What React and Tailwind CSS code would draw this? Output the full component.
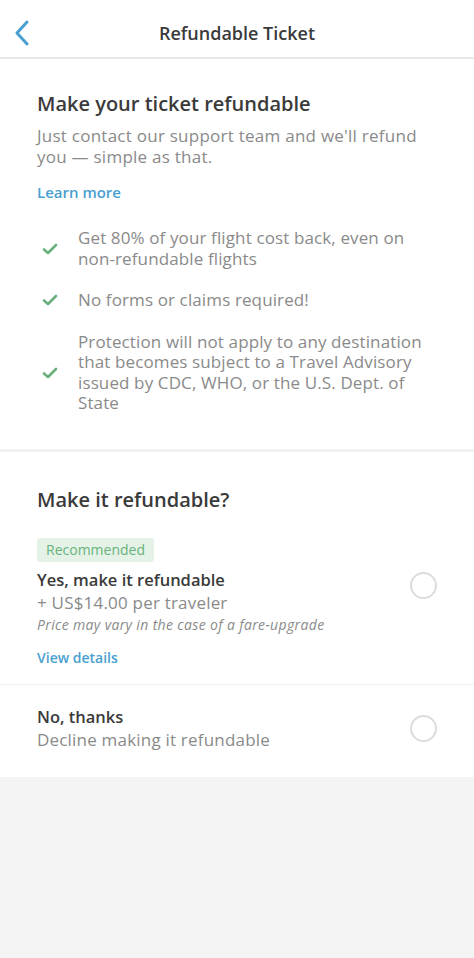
import React from "react";

const font = { fontFamily: '"Open Sans", "Liberation Sans", sans-serif' };

function Check() {
  return (
    <svg width="16" height="14" viewBox="0 0 16 14" className="shrink-0">
      <path d="M2 7.5 L6 11 L14 3" fill="none" stroke="#6aaf7c" strokeWidth="2.6" strokeLinecap="round" strokeLinejoin="round" />
    </svg>
  );
}

function Radio() {
  return <div className="w-[27px] h-[27px] rounded-full border-2 border-[#dcdcdc] shrink-0" />;
}

export default function App() {
  const items = [
    "Get 80% of your flight cost back, even on non-refundable flights",
    "No forms or claims required!",
    "Protection will not apply to any destination that becomes subject to a Travel Advisory issued by CDC, WHO, or the U.S. Dept. of State",
  ];
  return (
    <div style={font} className="w-[474px] min-h-[958px] bg-[#f4f4f4] flex flex-col">
      <div className="h-[59px] bg-white flex items-center relative border-b-2 border-[#e8e8e8]">
        <div className="absolute left-[13px] top-[20px]">
          <svg width="18" height="26" viewBox="0 0 18 26">
            <path d="M14 2 L4 13 L14 24" fill="none" stroke="#4a9fd0" strokeWidth="3" strokeLinecap="round" strokeLinejoin="round" />
          </svg>
        </div>
        <div className="w-full text-center text-[18px] font-semibold text-[#3a3a3a] pt-[9px]">Refundable Ticket</div>
      </div>

      <div className="bg-white px-[37px] pt-[32px] pb-[35px]">
        <div className="text-[20px] font-semibold text-[#3a3a3a] leading-[26px]">Make your ticket refundable</div>
        <div className="text-[17px] tracking-[0.25px] text-[#8a8a8a] leading-[21px] mt-[8px] pr-1">Just contact our support team and we'll refund you — simple as that.</div>
        <div className="text-[15px] font-semibold text-[#4a9fd0] mt-[15px] leading-[20px]">Learn more</div>
        <div className="mt-[26px] flex flex-col gap-[21px]">
          {items.map((t, i) => (
            <div key={i} className="flex items-center">
              <div className="w-[41px] shrink-0 pl-[5px] flex items-center"><Check /></div>
              <div className="text-[17px] tracking-[0.12px] text-[#8a8a8a] leading-[20.5px]">{t}</div>
            </div>
          ))}
        </div>
      </div>

      <div className="h-[3px] bg-[#f2f2f2]" />

      <div className="bg-white">
        <div className="px-[37px] pt-[35px]">
          <div className="text-[20px] font-semibold text-[#3a3a3a] leading-[26px]">Make it refundable?</div>
        </div>
        <div className="px-[37px] pt-[24px] pb-[16px] flex items-start border-b border-[#f0f0f0]">
          <div className="flex-1">
            <div className="inline-block bg-[#e4f2e7] text-[#68b27c] text-[14px] leading-[24px] px-[9px] rounded-[3px]">Recommended</div>
            <div className="text-[16.5px] font-semibold text-[#3a3a3a] leading-[22px] mt-[7px]">Yes, make it refundable</div>
            <div className="text-[17px] tracking-[0.2px] text-[#8a8a8a] leading-[22px] mt-[1px]">+ US$14.00 per traveler</div>
            <div className="text-[14px] tracking-[0.35px] italic text-[#8a8a8a] leading-[20px] mt-[1px]">Price may vary in the case of a fare-upgrade</div>
            <div className="text-[14px] font-semibold text-[#4a9fd0] leading-[20px] mt-[13px]">View details</div>
          </div>
          <div className="mt-[35px]"><Radio /></div>
        </div>
        <div className="px-[37px] pt-[21px] pb-[26px] flex items-center">
          <div className="flex-1">
            <div className="text-[16.5px] font-semibold text-[#3a3a3a] leading-[22px]">No, thanks</div>
            <div className="text-[17px] tracking-[0.2px] text-[#8a8a8a] leading-[22px] mt-[1px]">Decline making it refundable</div>
          </div>
          <Radio />
        </div>
      </div>
      <div className="flex-1 bg-[#f4f4f4]" />
    </div>
  );
}
